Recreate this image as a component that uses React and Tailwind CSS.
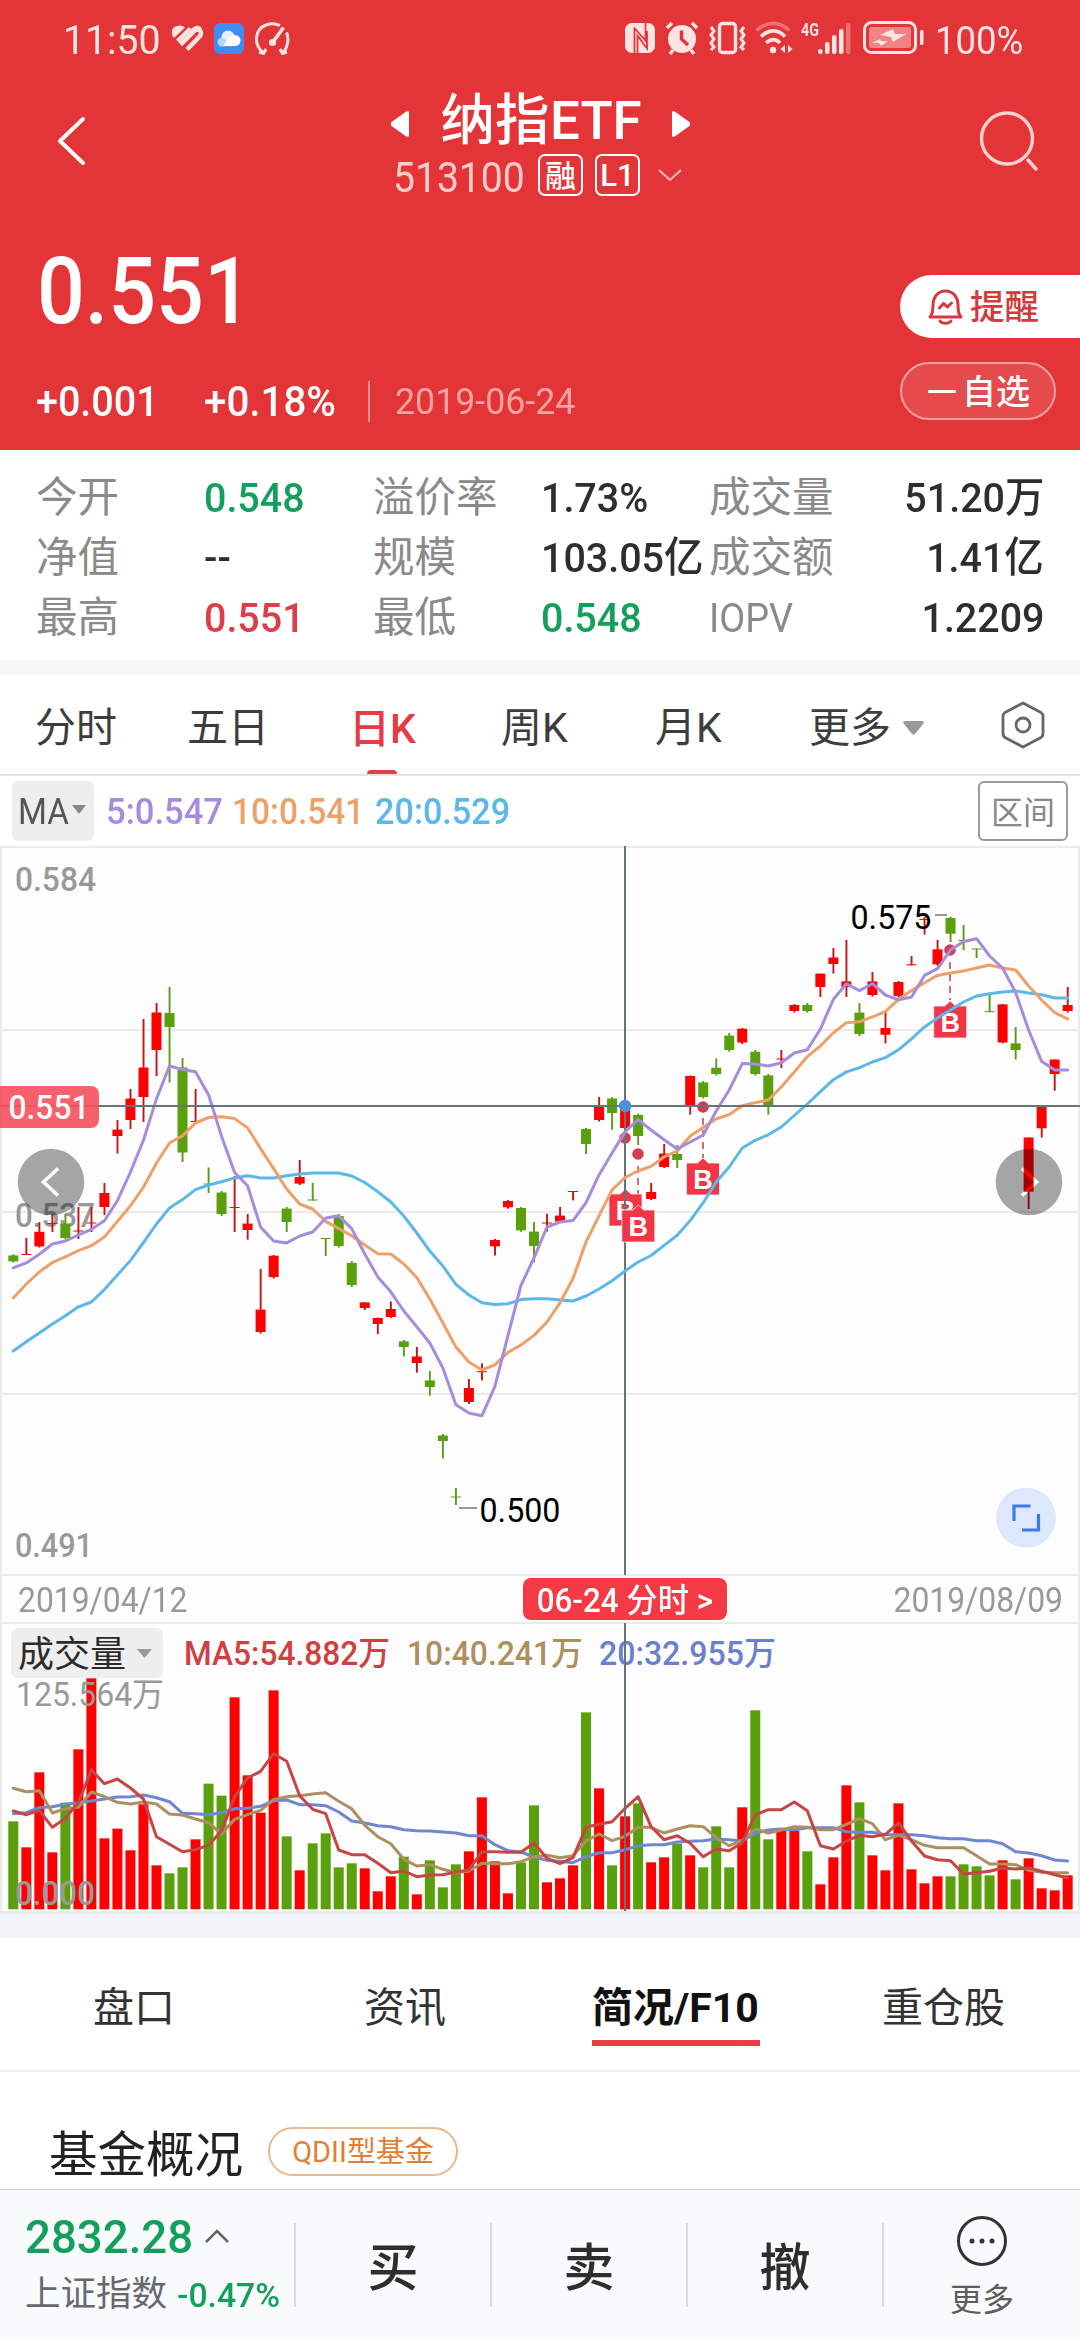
import React from "react";

const RED = "#fe0000";
const GREEN = "#5aa00c";
const GREY_LINE = "#ebebeb";

const xAt = (i) => 13.3 + 13.017 * i;

// color, high, body top, body bottom, low
const CANDLES = [
  ["g", 1254.3, 1255.4, 1261.4, 1262.5], ["r", 1238, 1254, 1255, 1255], ["r", 1222, 1231.8, 1246.4, 1247.5],
  ["r", 1214, 1223, 1224, 1232], ["g", 1214, 1223.6, 1238, 1239.3], ["r", 1207, 1230.5, 1231.5, 1239],
  ["r", 1207, 1222.5, 1223.5, 1232], ["r", 1183, 1193, 1207, 1215], ["r", 1120, 1129.6, 1136, 1153.6],
  ["r", 1089, 1098.6, 1120, 1129], ["r", 1019, 1067.5, 1097, 1122], ["r", 1003, 1012.5, 1050, 1076],
  ["g", 987, 1013, 1027, 1082.5], ["g", 1058, 1067.5, 1152.5, 1162], ["r", 1089, 1121, 1122, 1122],
  ["g", 1167.5, 1183.5, 1184.5, 1193], ["g", 1191, 1192.5, 1214, 1216], ["r", 1176, 1207, 1208, 1232],
  ["r", 1214, 1223.6, 1230, 1239.6], ["r", 1269, 1309.6, 1332, 1333.6], ["r", 1255, 1255.7, 1277, 1278.6],
  ["g", 1207, 1208.6, 1222, 1232], ["r", 1160, 1177, 1183.6, 1185], ["g", 1183, 1199.5, 1200.5, 1200.5],
  ["g", 1238, 1238, 1239, 1256], ["g", 1214, 1216, 1246, 1247.5], ["g", 1261, 1263, 1285, 1287],
  ["r", 1302, 1302.4, 1308, 1310], ["r", 1317.5, 1318, 1324, 1334], ["r", 1301.5, 1309, 1317, 1318],
  ["g", 1340, 1341.4, 1347, 1356.5], ["r", 1347, 1356.5, 1363, 1372.6], ["g", 1371, 1380.4, 1387, 1395.6],
  ["g", 1434, 1435.5, 1441, 1458.5], ["g", 1488, 1496.5, 1497.5, 1505], ["r", 1379, 1388, 1402, 1404],
  ["r", 1363.4, 1371.2, 1372.2, 1380.4], ["r", 1239, 1240, 1246.3, 1255.5], ["r", 1200, 1201, 1207.3, 1208.7],
  ["g", 1207, 1208, 1230.3, 1231.7], ["g", 1222, 1231.6, 1246, 1262.4], ["r", 1213.7, 1222.5, 1223.5, 1231.6],
  ["r", 1207, 1215.6, 1221.5, 1223], ["r", 1191, 1191, 1192, 1200.4], ["g", 1128, 1129, 1144, 1154],
  ["r", 1097, 1106, 1120, 1121.5], ["g", 1097, 1098.5, 1113, 1129.7], ["r", 1106, 1106, 1128, 1128.5],
  ["g", 1113.6, 1115, 1136, 1145], ["r", 1183, 1192, 1199, 1200], ["r", 1144, 1153.6, 1167, 1168],
  ["g", 1145, 1154, 1160, 1168], ["r", 1075.5, 1076, 1105, 1114.6], ["g", 1081, 1082.4, 1097, 1098.5],
  ["g", 1058.5, 1067.7, 1074, 1075.5], ["g", 1033, 1035.6, 1050, 1051.7], ["r", 1028, 1028.7, 1042.5, 1044],
  ["g", 1050, 1051.7, 1074, 1075.5], ["g", 1074, 1075.5, 1105, 1114.6], ["r", 1050, 1058.5, 1059.5, 1068],
  ["r", 1004, 1005, 1011, 1012.6], ["g", 1003, 1005, 1011, 1012.6], ["r", 973.6, 973.6, 987, 997],
  ["r", 948, 957.5, 964, 973.6], ["r", 940, 981.4, 987, 997], ["g", 1003, 1012.6, 1034, 1036],
  ["r", 972, 981.4, 995, 996.6], ["r", 1012.6, 1028, 1034.7, 1043.4], ["r", 981, 982, 996, 997.5],
  ["r", 956, 964.3, 965.3, 965.3], ["r", 917, 919, 920, 934.6], ["r", 940, 949.3, 964.4, 965.8],
  ["g", 916.7, 918, 933.7, 942], ["g", 925, 940, 941, 950], ["g", 948.5, 948.5, 949.5, 958],
  ["g", 995, 1011.2, 1012.2, 1012.2], ["r", 1004, 1004.4, 1042.5, 1043.4], ["g", 1027, 1043.4, 1050, 1059.5],
  ["r", 1137.5, 1137.5, 1191.7, 1209], ["r", 1106, 1106, 1128.3, 1137.5], ["r", 1059.5, 1059.5, 1074, 1090.7],
  ["r", 987, 1005, 1011, 1012.6],
];

const MA5 = [1267.9, 1262.9, 1254.3, 1244, 1241, 1235, 1229.3, 1220.7, 1200.7, 1172, 1140, 1098.6, 1066, 1069.6, 1071.8, 1095, 1136.4, 1172.5, 1185.7, 1227, 1241, 1242.9, 1236, 1232, 1217.9, 1215.7, 1228.6, 1254, 1277, 1291.8, 1311, 1326.7, 1343, 1368, 1404.7, 1413, 1415.8, 1386.4, 1335.9, 1285.4, 1257.8, 1227, 1222, 1220.6, 1202.7, 1174.7, 1153, 1131.6, 1119.6, 1130, 1139.8, 1149, 1142, 1135, 1111, 1090, 1063.6, 1064, 1066, 1062.7, 1053, 1049.8, 1029, 999.3, 983.7, 990.6, 983.7, 995, 999.8, 997, 975.4, 968.6, 950, 941.5, 938.7, 956, 968, 992.4, 1030, 1061.3, 1070, 1070];
const MA10 = [1297.9, 1284, 1272, 1262.5, 1256.8, 1250.7, 1245.7, 1237, 1221.4, 1205.7, 1187, 1163, 1143, 1135.7, 1123, 1117.5, 1116.8, 1118.6, 1127.9, 1148.6, 1168.6, 1189, 1204, 1209, 1221.4, 1228.6, 1235.7, 1245, 1253.7, 1254, 1264, 1277.6, 1299, 1323, 1347, 1362, 1370, 1364.8, 1352.4, 1345, 1335.4, 1322, 1302.8, 1278.5, 1242, 1215.6, 1189.9, 1177.5, 1171, 1166.4, 1156.8, 1151, 1136, 1127.4, 1118.7, 1114.6, 1105.8, 1102.6, 1100, 1087, 1071.9, 1056.7, 1046, 1032.8, 1022.7, 1021.8, 1016.8, 1011.7, 999.3, 990.6, 982.8, 975.4, 973, 970.9, 968, 965, 968, 970, 986, 1000, 1012.6, 1019];
const MA20 = [1351, 1341.8, 1332.9, 1324, 1315.7, 1306.8, 1302, 1289.6, 1275, 1260.4, 1242.5, 1224, 1207.9, 1199.6, 1189.6, 1185, 1181.8, 1177.9, 1175.7, 1177.9, 1177.9, 1175.7, 1173.9, 1173, 1173, 1173, 1176, 1182.5, 1191.7, 1202, 1216, 1233, 1251, 1266, 1284.4, 1295, 1302.8, 1304.6, 1303.7, 1299.6, 1298.7, 1298.7, 1300, 1301, 1296, 1289, 1280.8, 1271, 1262, 1255.5, 1245.4, 1235.3, 1220.6, 1202.7, 1182, 1167, 1148, 1140.3, 1134.8, 1127, 1115.5, 1104, 1091.6, 1079.7, 1071.9, 1067.7, 1062, 1057.6, 1049.8, 1038.8, 1026.9, 1018, 1009.9, 1002, 996, 993.8, 992, 991, 993, 994.7, 998, 998];

// Volume panel values are stored in thirds of a pixel below y = 1540.
const VOL = [844, 922, 697, 937, 788, 628, 415, 895, 866, 931, 793, 976, 1000, 982, 898, 731, 767, 472, 706, 818, 451, 889, 991, 910, 880, 982, 970, 985, 1054, 1009, 950, 1063, 961, 1042, 973, 934, 772, 964, 1060, 967, 796, 1027, 1015, 976, 517, 745, 976, 829, 790, 967, 952, 911, 946, 982, 859, 982, 802, 511, 898, 868, 872, 934, 1033, 952, 736, 787, 946, 991, 790, 988, 1030, 1009, 1009, 973, 979, 1006, 961, 1018, 955, 1045, 1051, 1006];
const VMA5 = [813, 824, 811, 862, 835, 787, 690, 731, 717, 744, 777, 890, 913, 935, 929, 916, 872, 770, 714, 694, 641, 664, 767, 808, 821, 930, 944, 944, 970, 998, 993, 1010, 1005, 1004, 996, 990, 935, 935, 937, 937, 909, 955, 971, 953, 862, 853, 845, 805, 770, 860, 899, 887, 910, 950, 927, 932, 908, 824, 809, 809, 786, 812, 917, 927, 903, 886, 890, 883, 849, 903, 948, 959, 962, 1002, 998, 994, 984, 987, 984, 994, 1004, 1014];
const VMA10 = [745, 755, 752, 819, 806, 802, 756, 770, 787, 792, 786, 792, 822, 825, 837, 848, 882, 838, 824, 811, 779, 770, 767, 762, 758, 784, 806, 856, 890, 911, 958, 978, 974, 988, 998, 993, 970, 971, 971, 965, 950, 946, 953, 947, 903, 882, 902, 889, 862, 862, 879, 867, 857, 860, 893, 917, 902, 867, 879, 870, 860, 862, 869, 869, 853, 836, 851, 899, 886, 899, 916, 923, 923, 923, 947, 972, 972, 974, 991, 997, 998, 998];
const VMA20 = [821, 818, 803, 800, 793, 788, 783, 777, 771, 770, 765, 773, 785, 820, 821, 824, 818, 806, 805, 799, 782, 780, 794, 794, 797, 816, 843, 849, 857, 860, 869, 872, 873, 876, 879, 887, 887, 914, 932, 936, 951, 961, 964, 968, 950, 938, 938, 929, 917, 914, 914, 906, 904, 902, 897, 899, 903, 879, 870, 867, 869, 863, 863, 863, 875, 877, 877, 884, 884, 884, 887, 893, 896, 896, 902, 902, 911, 935, 939, 947, 960, 963];

const volY = (v) => 1540 + v / 3;
const points = (values, f = (v) => v) => values.map((v, i) => `${xAt(i).toFixed(1)},${f(v).toFixed(1)}`).join(" ");

function Line({ values, color, map }) {
  return <polyline points={points(values, map)} fill="none" stroke={color} strokeWidth="3" strokeLinejoin="round" strokeLinecap="round" />;
}

function Label({ x, y, w, fill, size = 33, weight = 400, children }) {
  return (
    <text x={x} y={y} fill={fill} fontSize={size} fontWeight={weight} textLength={w} lengthAdjust="spacingAndGlyphs">
      {children}
    </text>
  );
}

function BuyTag({ x, y }) {
  return (
    <g>
      <path d={`M${x - 16.5} ${y + 5}h11l5.5-5l5.5 5h11v32h-33z`} fill="#f13745" stroke="#fff" strokeWidth="1" strokeOpacity=".7" />
      <text x={x} y={y + 30.5} textAnchor="middle" fill="#fff" fontSize="27" fontWeight="700" fontFamily="Liberation Sans">B</text>
    </g>
  );
}

function PriceChart() {
  return (
    <svg className="block h-[730px] w-[1080px]" viewBox="0 846 1080 730">
      <defs>
        <mask id="navLeft">
          <rect x="0" y="1140" width="100" height="90" fill="#fff" />
          <path d="M58 1168.500L43.500 1182L58 1195.500" fill="none" stroke="#000" strokeWidth="3.600" />
        </mask>
        <mask id="navRight">
          <rect x="980" y="1140" width="100" height="90" fill="#fff" />
          <path d="M1022 1168.500L1036.500 1182L1022 1195.500" fill="none" stroke="#000" strokeWidth="3.600" />
        </mask>
      </defs>
      <rect x="0" y="846" width="1080" height="730" fill="#fdfdfd" />
      {[847, 1030, 1212, 1394, 1575].map((y) => (
        <rect key={y} x="0" y={y - 1} width="1080" height="2" fill={GREY_LINE} />
      ))}
      <rect x="0" y="846" width="2" height="730" fill={GREY_LINE} />
      <rect x="1078" y="846" width="2" height="730" fill={GREY_LINE} />

      <Label x="15" y="1227" w="80" fill="#999" weight="500">0.537</Label>
      {CANDLES.map(([c, high, top, bottom, low], i) => {
        const x = xAt(i);
        return (
          <g key={i}>
            <rect x={x - 0.9} y={high} width="1.900" height={low - high} fill={c === "r" ? "#c41414" : "#5a9a1c"} />
            <rect x={x - 5} y={top} width="10" height={bottom - top} fill={c === "r" ? RED : GREEN} />
          </g>
        );
      })}

      <g stroke="#c4606c" strokeWidth="1.800" strokeDasharray="7 5">
        <path d="M638 1166V1206" />
        <path d="M703 1118V1158" />
        <path d="M950 962V1000" />
      </g>
      <g fill="#d63c4c">
        <circle cx="625" cy="1138" r="5.800" />
        <circle cx="638" cy="1154" r="5.800" />
        <circle cx="703" cy="1107" r="5.800" />
        <circle cx="950" cy="950" r="5.800" />
      </g>
      <BuyTag x={625.5} y={1189} />
      <path d="M625 846V1575" stroke="#66737b" strokeWidth="2" />
      <BuyTag x={638.3} y={1205} />
      <BuyTag x={703} y={1158} />
      <BuyTag x={950.2} y={1001} />

      <Line values={MA20} color="#5cb8e8" />
      <Line values={MA10} color="#eda068" />
      <Line values={MA5} color="#a58cdd" />

      <path d="M0 1106H1080" stroke="#66737b" strokeWidth="2" />
      <circle cx="625" cy="1106" r="6.200" fill="#4a90dc" />

      <path d="M935 915H947M459 1508H477" stroke="#777" strokeWidth="1.600" />
      <Label x="850.500" y="929" w="81" fill="#000">0.575</Label>
      <Label x="479.500" y="1522" w="81" fill="#000">0.500</Label>
      <Label x="15" y="891" w="81" fill="#999" weight="500">0.584</Label>
      <Label x="15" y="1557" w="78" fill="#999" weight="500">0.491</Label>

      <rect x="-8" y="1086" width="107" height="42" rx="8" fill="#f5505b" fillOpacity=".9" />
      <Label x="8.500" y="1119" w="81" fill="#fff" weight="500">0.551</Label>

      <circle cx="51" cy="1182" r="33.300" fillOpacity=".35" mask="url(#navLeft)" />
      <circle cx="1029" cy="1182" r="33.300" fillOpacity=".35" mask="url(#navRight)" />

      <circle cx="1026" cy="1517.700" r="30" fill="#dee8fd" />
      <path d="M1014 1521V1506H1030.500M1022 1530H1038.500V1514" fill="none" stroke="#3b7ae5" strokeWidth="3.200" />
    </svg>
  );
}

function VolumeChart() {
  return (
    <svg className="block h-[292px] w-[1080px]" viewBox="0 1622 1080 292">
      <rect x="0" y="1622" width="1080" height="292" fill="#fdfdfd" />
      <rect x="0" y="1622" width="1080" height="2" fill={GREY_LINE} />
      <rect x="0" y="1911" width="1080" height="3" fill={GREY_LINE} />
      <rect x="0" y="1622" width="2" height="292" fill={GREY_LINE} />
      <rect x="1078" y="1622" width="2" height="292" fill={GREY_LINE} />
      {VOL.map((v, i) => (
        <rect key={i} x={xAt(i) - 5} y={volY(v)} width="10" height={1909.3 - volY(v)} fill={CANDLES[i][0] === "r" ? RED : GREEN} />
      ))}
      <Line values={VMA20} color="#6f86d0" map={volY} />
      <Line values={VMA10} color="#ac9060" map={volY} />
      <Line values={VMA5} color="#c94444" map={volY} />
      <Label x="16" y="1706" w="148" fill="#999">125.564万</Label>
      <Label x="15" y="1905" w="80" fill="#999" weight="500">0.000</Label>
      <Label x="184" y="1665" w="206" fill="#cf4040" weight="500">MA5:54.882万</Label>
      <Label x="407" y="1665" w="176" fill="#ac9060" weight="500">10:40.241万</Label>
      <Label x="599" y="1665" w="177" fill="#6a80cc" weight="500">20:32.955万</Label>
      <path d="M625 1623V1911" stroke="#66737b" strokeWidth="2" />
    </svg>
  );
}

function StatusBar() {
  return (
    <div className="flex h-[76px] items-center text-[#ffe3e3]">
      <span className="ml-[63px] mt-[5px] w-[108px] text-[40px] leading-none"><span className="inline-block origin-left scale-x-[0.98]">11:50</span></span>
      <svg className="h-[30px] w-[34px]" viewBox="0 0 34 30" fill="none" stroke="currentColor" strokeLinecap="butt">
        <path d="M2 14C-1 8 2 3 7 3C10 2 12 3 14 4.500L3.500 14.500z" fill="currentColor" stroke="none" />
        <path d="M6.500 18L19.500 5.500" strokeWidth="4.200" />
        <path d="M11.500 22.500L23 11C25 9 27 10.500 25.500 12.500L16.500 21.500" strokeWidth="1" opacity="0" />
        <path d="M9.500 21.500L22.500 8.500C26 4 32.500 8 29 13L16 26.500" strokeWidth="4.600" strokeLinejoin="round" />
        <path d="M18.500 7L22 4.500C26 1.500 30 3 31 6L24 8z" fill="currentColor" stroke="none" />
      </svg>
      <svg className="ml-[9px] h-[31px] w-[30px]" viewBox="0 0 30 31">
        <rect width="30" height="31" rx="6" fill="#3f8cf5" />
        <circle cx="14" cy="14" r="6.500" fill="#e5f1ff" />
        <circle cx="21" cy="17.500" r="5.500" fill="#fff" />
        <circle cx="8" cy="19" r="4.500" fill="#b5d6ff" />
        <path d="M9 23.300L15 14L22 23z" fill="#fff" />
      </svg>
      <svg className="ml-[10px] h-[34px] w-[38px]" viewBox="0 0 38 34" fill="none" stroke="currentColor" strokeWidth="3">
        <path d="M5 31L9.500 32.500L12 28M9 31.500C-1 23 1 8 12 4C16.500 2.200 21 2.200 26 4.500M32.500 11.500C35.500 18 33.500 27 29 31.500M26 28L28.500 32.500L33 31" />
        <path d="M19 21L29.500 6.500" strokeWidth="3.500" />
        <circle cx="18.500" cy="21.500" r="3.600" fill="currentColor" stroke="none" />
      </svg>

      <div className="ml-[332px] flex items-center">
        <svg className="h-[32px] w-[32px]" viewBox="0 0 32 32">
          <rect x="1" y="1" width="30" height="30" rx="7" fill="currentColor" />
          <path d="M10.500 31V6.500M10 5.500L21.500 18.500V1M13.500 31V13.500L23 26.500V9" fill="none" stroke="#e33537" strokeWidth="1.800" />
        </svg>
        <svg className="ml-[9px] h-[34px] w-[34px]" viewBox="0 0 34 34" fill="none" stroke="currentColor">
          <circle cx="17" cy="18" r="14" fill="currentColor" stroke="none" />
          <path d="M2 7L7 2M32 7L27 2M8 29L5 33M26 29L29 33" strokeWidth="3.500" />
          <path d="M16.500 9.500V18L23 24" stroke="#e33537" strokeWidth="3.400" />
        </svg>
        <svg className="ml-[9px] h-[34px] w-[40px]" viewBox="0 0 40 34" fill="none" stroke="currentColor" strokeWidth="3.400">
          <rect x="11.500" y="2.500" width="16" height="29" rx="3" />
          <path d="M3 6l3 4l-3 4l3 4l-3 4l3 4l-3 3M36 6l-3 4l3 4l-3 4l3 4l-3 4l3 3" strokeWidth="3" />
        </svg>
        <svg className="ml-[7px] h-[34px] w-[40px]" viewBox="0 0 40 34" fill="none" stroke="currentColor" strokeWidth="3.600">
          <path d="M1.500 9.500C12 0 24 0 34.500 9.500" opacity=".35" />
          <path d="M6 15.500C14 8 23 8 30 15.500M11 22C16 17.500 21 17.500 25 22" />
          <circle cx="18" cy="29" r="3.200" fill="currentColor" stroke="none" />
          <path d="M30 24v8l-4.500-4zM33 24v8l4.500-4z" fill="currentColor" stroke="none" />
        </svg>
        <span className="ml-[6px] mb-[18px] w-[17px] text-[19px] font-bold leading-none"><span className="inline-block origin-left scale-x-[0.75]">4G</span></span>
        <svg className="h-[34px] w-[34px]" viewBox="0 0 34 34" fill="currentColor">
          <rect x="0" y="28" width="4.500" height="5" rx="2" />
          <rect x="7" y="21" width="4.500" height="12" rx="2" />
          <rect x="14" y="14" width="4.500" height="19" rx="2" />
          <rect x="21" y="8" width="4.500" height="25" rx="2" />
          <rect x="28" y="2" width="4.500" height="31" rx="2" opacity=".35" />
        </svg>
        <svg className="ml-[11px] h-[34px] w-[62px]" viewBox="0 0 62 34">
          <rect x="1.500" y="1.500" width="51" height="30" rx="7" fill="none" stroke="currentColor" strokeWidth="3" />
          <rect x="6" y="6" width="42" height="21" rx="2" fill="currentColor" opacity=".45" />
          <path d="M17 14L30 8L32 13L43 13L30 21L28 16zM9 22L17 18L18 20L25 20L18 25L16 22z" fill="currentColor" />
          <rect x="57" y="9" width="3.500" height="15" rx="1.500" fill="currentColor" />
        </svg>
        <span className="ml-[10px] mt-[5px] text-[38px] leading-none"><span className="inline-block origin-left scale-x-[0.96]">100%</span></span>
      </div>
    </div>
  );
}

function Header() {
  return (
    <header className="h-[450px] bg-[#e33537] text-white">
      <StatusBar />
      <div className="flex h-[130px] justify-between">
        <svg className="ml-[52px] mt-[36px] h-[60px] w-[40px]" viewBox="0 0 40 60" fill="none" stroke="#fff" strokeWidth="4" strokeLinecap="round" strokeLinejoin="round">
          <path d="M31 7L8 29L31 51" />
        </svg>
        <div className="ml-[22px] flex w-[310px] flex-col">
          <div className="flex h-[84px] items-center justify-between pr-[9px]">
            <svg className="mt-[12px] h-[28px] w-[20px]" viewBox="0 0 20 28" fill="#fff"><path d="M17 1Q19 1 19 3V25Q19 27 17 27L1.500 16Q0 14 1.500 12z" /></svg>
            <span className="ml-[3px] mt-[3px] h-[64px] w-[203px] whitespace-nowrap text-[54.500px] font-medium leading-[64px]">纳指<span className="inline-block origin-left scale-x-[0.97]">ETF</span></span>
            <svg className="mt-[12px] h-[28px] w-[20px]" viewBox="0 0 20 28" fill="#fff"><path d="M3 1Q1 1 1 3V25Q1 27 3 27L18.500 16Q20 14 18.500 12z" /></svg>
          </div>
          <div className="-mt-[6px] flex h-[42px] items-center">
            <span className="ml-[3px] mt-[5px] w-[145px] text-[42px] leading-none text-[#ffcccc]"><span className="inline-block origin-left scale-x-[0.93]">513100</span></span>
            <span className="flex h-[42px] w-[45px] items-center justify-center rounded-[7px] border-2 border-white pt-[2px] text-[31px] font-medium leading-none">融</span>
            <span className="ml-[12px] flex h-[42px] w-[45px] items-center justify-center rounded-[7px] border-2 border-white text-[31px] font-medium leading-none">L1</span>
            <svg className="ml-[17px] h-[16px] w-[26px]" viewBox="0 0 26 16" fill="none" stroke="#ffb9b9" strokeWidth="2"><path d="M2 3L13 13L24 3" /></svg>
          </div>
        </div>
        <svg className="mr-[36px] mt-[31px] h-[70px] w-[68px]" viewBox="0 0 68 70" fill="none" stroke="#ffd0d0" strokeWidth="3.400" strokeLinecap="round">
          <circle cx="31" cy="31.500" r="25.500" />
          <path d="M52 53L60 62" />
        </svg>
      </div>
      <div className="flex justify-between">
        <div className="pl-[36px]">
          <div className="ml-[1px] mt-[38px] h-[94px] origin-left scale-x-[0.915] text-[92px] font-medium leading-[96px]">0.551</div>
          <div className="mt-[42px] flex h-[42px] items-center pt-[1px] text-[42px] font-medium leading-none">
            <span className="w-[168px]"><span className="inline-block origin-left scale-x-[0.94]">+0.001</span></span>
            <span className="w-[164px]"><span className="inline-block origin-left scale-x-[0.96]">+0.18%</span></span>
            <span className="h-[41px] w-[2px] bg-[#f29090]" />
            <span className="ml-[25px] text-[37px] font-normal text-[#fba3a3]"><span className="inline-block origin-left scale-x-[0.965]">2019-06-24</span></span>
          </div>
        </div>
        <div className="mt-[69px] w-[180px]">
          <div className="flex h-[63px] items-center rounded-l-full bg-white pl-[28px] text-[34.500px] font-medium leading-none text-[#d4393c]">
            <svg className="h-[37px] w-[35px]" viewBox="0 0 35 37" fill="none" stroke="currentColor" strokeWidth="3" strokeLinecap="round" strokeLinejoin="round">
              <path d="M2 29C5 26 5 22 5 17C5 9 10 3 17.500 3C25 3 30 9 30 17C30 22 30 26 33 29z" />
              <path d="M12 33C14 36 21 36 23 33" />
              <path d="M11.500 20L15.500 15.500L19.500 19L23.500 15" />
            </svg>
            <span className="ml-[7px] mt-[2px]">提醒</span>
          </div>
          <div className="mt-[24px] flex h-[58px] w-[156px] items-center rounded-full border-2 border-[#f5a0a0] bg-[#e64a4c] pl-[26px] text-[34px] font-medium leading-none">
            <span className="h-[3px] w-[28px] rounded-full bg-white" />
            <span className="ml-[6px] mt-[2px]">自选</span>
          </div>
        </div>
      </div>
    </header>
  );
}

const STATS = [
  ["今开", "0.548", "g", "溢价率", "1.73%", "", "成交量", "51.20万"],
  ["净值", "--", "", "规模", "103.05亿", "", "成交额", "1.41亿"],
  ["最高", "0.551", "r", "最低", "0.548", "g", "IOPV", "1.2209"],
];

const toneClass = { g: "text-[#13a05c]", r: "text-[#dc3f49]", "": "text-[#2e2e2e]" };

function Value({ tone, children }) {
  return <span className={`${toneClass[tone]} inline-block origin-left scale-x-[0.95] whitespace-nowrap font-medium`}>{children}</span>;
}

function Stats() {
  return (
    <section className="h-[210px] pt-[18px] text-[41.500px] leading-none text-[#8a8a8a]">
      {STATS.map((r) => (
        <div key={r[0]} className="grid h-[60px] grid-cols-[168px_169px_168px_168px_1fr] items-center pl-[36px] pr-[36px]">
          <span>{r[0]}</span>
          <Value tone={r[2]}>{r[1]}</Value>
          <span>{r[3]}</span>
          <Value tone={r[5]}>{r[4]}</Value>
          <span className="flex items-center justify-between whitespace-nowrap">
            <span className="w-[130px]"><span className={r[6] === "IOPV" ? "inline-block origin-left scale-x-[0.91]" : ""}>{r[6]}</span></span>
            <span className="origin-right scale-x-[0.95] font-medium text-[#2e2e2e]">{r[7]}</span>
          </span>
        </div>
      ))}
    </section>
  );
}

function PeriodTabs() {
  return (
    <nav className="flex h-[101px] items-stretch border-b-2 border-[#e6e6e6] pl-[35px] text-[41px] leading-none text-[#3d3d3d]">
      <span className="flex w-[152px] items-center pt-[7px]">分时</span>
      <span className="flex w-[162px] items-center pt-[7px]">五日</span>
      <span className="flex w-[152px] flex-col pt-[34px] font-medium text-[#e43c46]">
        <span className="flex-1">日K</span>
        <span className="ml-[18px] h-[4px] w-[30px] rounded-t bg-[#e0404a]" />
      </span>
      <span className="flex w-[154px] items-center pt-[7px]">周K</span>
      <span className="flex w-[154px] items-center pt-[7px]">月K</span>
      <span className="flex w-[180px] items-center pt-[7px]">
        更多
        <svg className="ml-[11px] h-[14px] w-[23px]" viewBox="0 0 23 14" fill="#999"><path d="M3 0H20Q23 0 21 3L13 13Q11.500 14 10 13L2 3Q0 0 3 0z" /></svg>
      </span>
      <svg className="ml-[10px] mt-[25px] h-[50px] w-[46px]" viewBox="0 0 46 50" fill="none" stroke="#666" strokeWidth="2.800" strokeLinejoin="round">
        <path d="M24 3L42 12.500Q44 14 44 16V34Q44 36 42 37.500L24 47L6 37.500Q4 36 4 34V16Q4 14 6 12.500z" />
        <circle cx="24" cy="25" r="7" />
      </svg>
    </nav>
  );
}

function MaRow() {
  return (
    <div className="flex h-[70px] items-center pl-[12px] pr-[12px] text-[36px] leading-none">
      <span className="flex h-[60px] w-[82px] items-center rounded-[6px] bg-[#eee] pl-[6px] pt-[2px] text-[#555]">
        <span className="w-[54px]"><span className="inline-block origin-left scale-x-[0.92]">MA</span></span>
        <svg className="-mt-[6px] h-[9px] w-[14px]" viewBox="0 0 14 9" fill="#888"><path d="M0 0H14L7 9z" /></svg>
      </span>
      <span className="ml-[12px] mt-[2px] w-[126px] text-[#a58cdd]"><span className="inline-block origin-left scale-x-[0.96] font-medium">5:0.547</span></span>
      <span className="mt-[2px] w-[143px] text-[#eda068]"><span className="inline-block origin-left scale-x-[0.93] font-medium">10:0.541</span></span>
      <span className="mt-[2px] text-[#5cb8e8]"><span className="inline-block origin-left scale-x-[0.95] font-medium">20:0.529</span></span>
      <span className="ml-auto flex h-[60px] w-[90px] items-center justify-center rounded-[6px] border-2 border-[#999] pt-[3px] text-[32px] text-[#888]">区间</span>
    </div>
  );
}

function DateRow() {
  return (
    <div className="grid h-[46px] grid-cols-[505px_204px_1fr] items-center border-x-2 border-[#ebebeb] bg-[#fdfdfd] pl-[16px] pr-[15px] text-[35px] leading-none text-[#999]">
      <span className="mt-[2px] w-[180px] origin-left scale-x-[0.91]">2019/04/12</span>
      <span className="flex h-[42px] items-center justify-center whitespace-nowrap rounded-[8px] bg-[#f43a44] pt-[2px] font-medium text-white">
        <span className="scale-x-[0.95] text-[33px]">06-24 分时 &gt;</span>
      </span>
      <span className="mt-[2px] origin-right scale-x-[0.91] text-right">2019/08/09</span>
    </div>
  );
}

function VolumePanel() {
  return (
    <div className="relative">
      <VolumeChart />
      <span className="absolute left-[11px] top-[6px] flex h-[50px] w-[152px] items-center rounded-[7px] bg-[#eee] pl-[7px] pt-[3px] text-[36px] leading-none text-[#2b2b2b]">
        成交量
        <svg className="-mt-[2px] ml-[11px] h-[9px] w-[15px]" viewBox="0 0 15 9" fill="#999"><path d="M0 0H15L7.500 9z" /></svg>
      </span>
    </div>
  );
}

function InfoTabs() {
  return (
    <nav className="flex h-[134px] items-center border-b-2 border-[#eeeff5] pl-[93px] pt-[9px] text-[41px] leading-none text-[#333]">
      <span className="w-[271px]">盘口</span>
      <span className="w-[228px]">资讯</span>
      <span className="relative flex w-[290px] items-center font-bold text-[#111]">
        <span className="w-[169px] origin-left whitespace-nowrap">简况/F10</span>
        <span className="absolute -bottom-[17px] left-0 h-[6px] w-[168px] bg-[#ec3c46]" />
      </span>
      <span>重仓股</span>
    </nav>
  );
}

function TradeButton({ children }) {
  return <span className="flex h-[84px] w-[196px] items-center justify-center border-l-2 border-[#dcdde0] pt-[7px] text-[51px] font-medium text-[#2e2e2e]">{children}</span>;
}

function BottomBar() {
  return (
    <footer className="flex h-[151px] items-start border-t border-[#cfcfcf] bg-[#f9fafc] pt-[33px] leading-none">
      <div className="-mt-[11px] w-[294px] pl-[25px]">
        <div className="flex h-[48px] items-center text-[47px] font-medium text-[#13a05c]">
          <span className="w-[179px]"><span className="inline-block origin-left scale-x-[0.97]">2832.28</span></span>
          <svg className="h-[16px] w-[26px]" viewBox="0 0 26 16" fill="none" stroke="#666" strokeWidth="2.600"><path d="M2 14L13 3L24 14" /></svg>
        </div>
        <div className="mt-[15px] flex h-[40px] items-center whitespace-nowrap text-[35.500px] text-[#67686d]">
          <span className="w-[152px]">上证指数</span>
          <span className="inline-block origin-left scale-x-[1.02] text-[33px] font-medium text-[#13a05c]">-0.47%</span>
        </div>
      </div>
      <TradeButton>买</TradeButton>
      <TradeButton>卖</TradeButton>
      <TradeButton>撤</TradeButton>
      <span className="h-[84px] w-[2px] bg-[#dcdde0]" />
      <div className="-mt-[8px] flex flex-1 flex-col items-center text-[32px] text-[#5d5d5d]">
        <svg className="h-[52px] w-[52px]" viewBox="0 0 52 52" fill="none" stroke="#333" strokeWidth="3">
          <circle cx="26" cy="26" r="23.500" />
          <g fill="#333" stroke="none"><circle cx="16" cy="26" r="2.500" /><circle cx="26" cy="26" r="2.500" /><circle cx="36" cy="26" r="2.500" /></g>
        </svg>
        <span className="mt-[17px]">更多</span>
      </div>
    </footer>
  );
}

export default function App() {
  return (
    <main className="h-[2340px] w-[1080px] overflow-hidden bg-white font-['Roboto','Noto_Sans_CJK_SC',sans-serif]">
      <Header />
      <Stats />
      <div className="h-[15px] bg-[#f7f7f7]" />
      <PeriodTabs />
      <MaRow />
      <PriceChart />
      <DateRow />
      <VolumePanel />
      <div className="h-[24px] bg-[#f2f4f9]" />
      <InfoTabs />
      <section className="flex h-[117px] items-center pl-[49px] pt-[41px] leading-none">
        <h2 className="mt-[10px] text-[48.500px] text-[#222]">基金概况</h2>
        <span className="ml-[25px] flex h-[49px] w-[190px] items-center justify-center rounded-full border-2 border-[#eab88a] pt-[2px] text-[29px] text-[#e07f35]">QDII型基金</span>
      </section>
      <BottomBar />
    </main>
  );
}
